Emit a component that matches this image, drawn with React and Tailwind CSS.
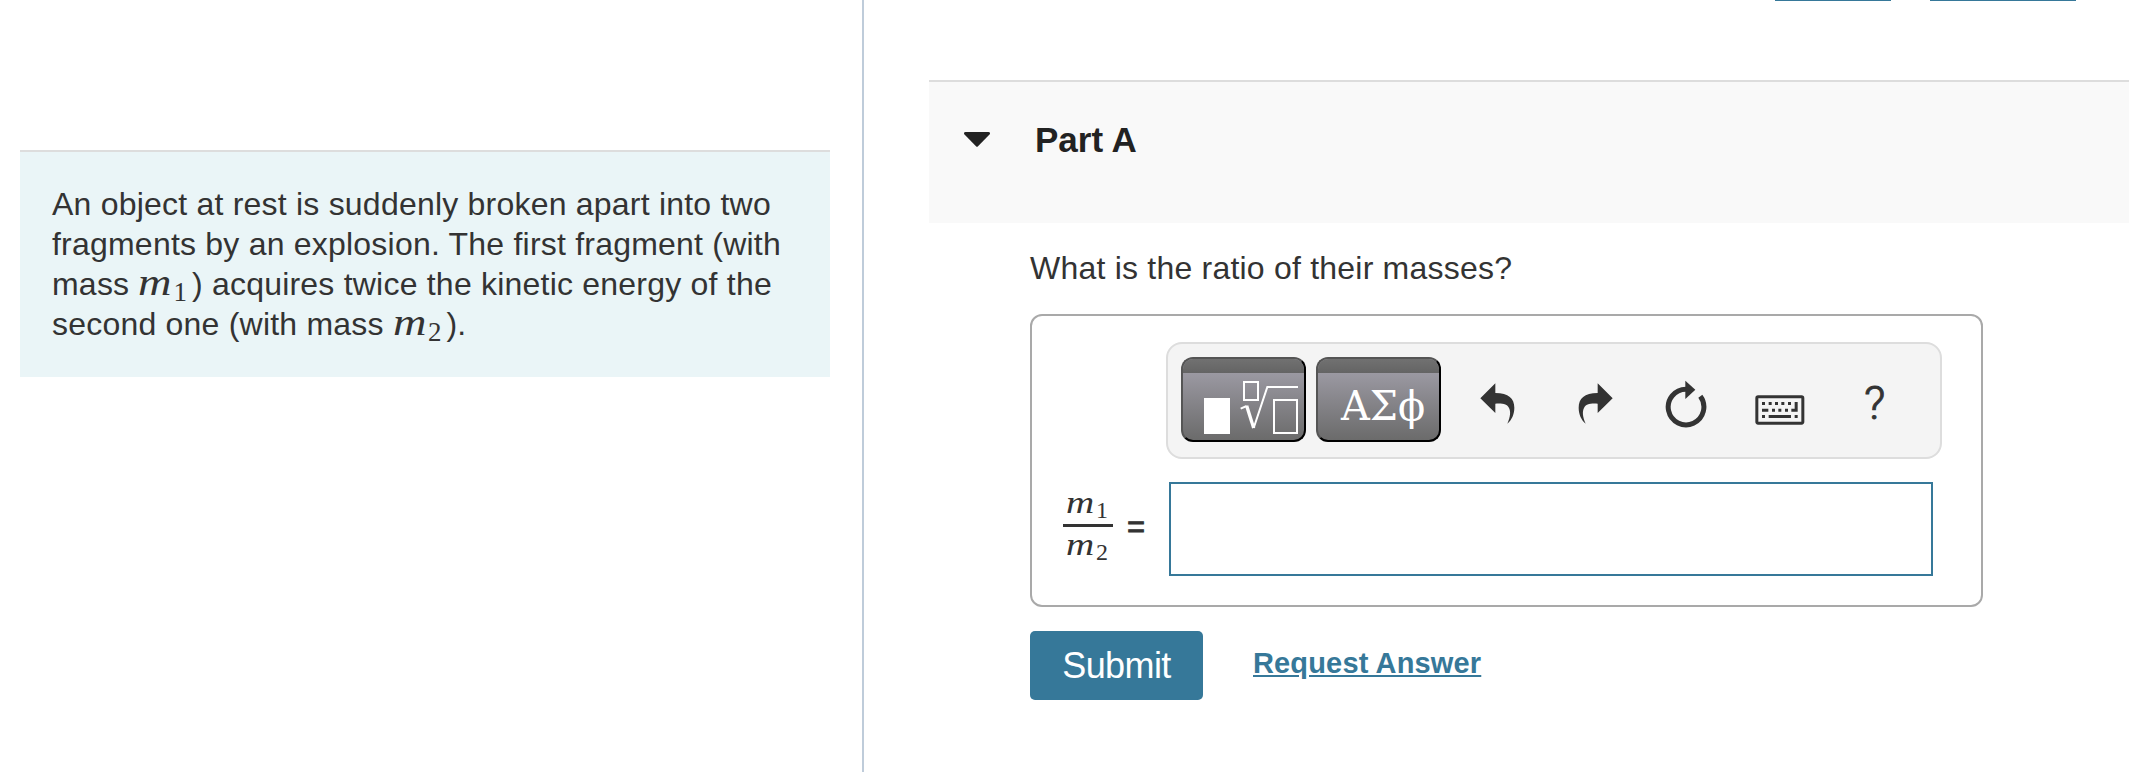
import { useState } from "react";

// Variable with a numeric subscript, e.g. m1
function Variable({ name, sub, small }) {
  if (small) {
    return (
      <span className="flex items-baseline font-['Liberation_Serif',serif] leading-none">
        <span className="w-[29px] origin-left scale-x-[1.22] text-[32px] italic">{name}</span>
        <span className="relative top-[5px] ml-px text-[24px]">{sub}</span>
      </span>
    );
  }

  return (
    <span className="mr-[5px] inline-flex items-baseline font-['Liberation_Serif',serif] leading-[34px] tracking-normal">
      <span className="inline-block w-[35px] origin-left scale-x-[1.22] text-[38px] italic">{name}</span>
      <span className="relative top-[6px] text-[27px]">{sub}</span>
    </span>
  );
}

function RootIcon() {
  return (
    <svg className="ml-[21px] mt-[8px] h-[54px] w-[95px]" viewBox="132 138 285 162" fill="none" stroke="#fff" strokeWidth="6">
      <rect x="132" y="189" width="78" height="108" fill="#fff" stroke="none" />
      <rect x="252" y="141" width="42" height="54" />
      <path d="M242 221l18-8" />
      <path d="M260 212l21 67" strokeWidth="10" />
      <path d="M281 279l41-123h92" />
      <rect x="342" y="195" width="69" height="99" />
    </svg>
  );
}

function UndoIcon() {
  return (
    <svg className="h-[41px] w-[35px]" viewBox="90 144 105 123" fill="#333">
      <path d="M91 190l45-45v29c40 0 57 17 57 44 0 20-8 37-21 48 10-22 10-38 5-47-6-12-17-14-41-13v28z" />
    </svg>
  );
}

function RefreshIcon() {
  return (
    <svg className="h-[48px] w-[42px]" viewBox="647 134 126 144" fill="#333">
      <path d="M753 183A53.5 53.5 0 1 1 710 161.500" fill="none" stroke="#333" strokeWidth="15" />
      <path d="M708 136l30 27-30 28z" />
    </svg>
  );
}

function KeyboardIcon() {
  return (
    <svg className="h-[30px] w-[50px]" viewBox="75 180 150 90" fill="#333">
      <rect x="80.500" y="185.500" width="138" height="79" rx="4" fill="none" stroke="#333" strokeWidth="9" />
      <path d="M96 201h9v9h-9zM116 201h9v9h-9zM135 201h9v9h-9zM154 201h9v9h-9zM174 201h9v9h-9z" />
      <path d="M96 221h19v9H96zM126 221h9v9h-9zM145 221h9v9h-9zM165 221h9v9h-9zM194 201h9v29h-19v-9h10z" />
      <path d="M96 240h9v9h-9zM116 240h67v9h-67zM194 240h9v9h-9z" />
    </svg>
  );
}

function PaletteButton({ label, children }) {
  return (
    <button
      aria-label={label}
      className="flex h-[85px] w-[125px] flex-col items-start overflow-hidden rounded-[12px] border-2 border-t-[#555] border-r-black border-b-black border-l-[#555] bg-linear-to-b from-[#9b99a2] from-[17%] to-[#6b6b6b] text-white"
    >
      <span className="h-[14px] w-full shrink-0 bg-linear-to-b from-[#717171] to-[#646464]" />
      {children}
    </button>
  );
}

function Toolbar() {
  return (
    <div className="ml-[134px] flex h-[117px] w-[776px] items-start rounded-[16px] border-2 border-[#ddd] bg-[#f4f4f4] pt-[13px] pl-[13px]">
      <div className="flex gap-[10px]">
        <PaletteButton label="Templates">
          <RootIcon />
        </PaletteButton>
        <PaletteButton label="Symbols">
          <span className="mt-[9px] ml-[23px] origin-left scale-x-[1.08] font-['DejaVu_Serif_Condensed','DejaVu_Serif',serif] text-[41px] leading-[48px]">
            ΑΣϕ
          </span>
        </PaletteButton>
      </div>
      <button aria-label="undo" className="mt-[26px] ml-[39px]">
        <UndoIcon />
      </button>
      <button aria-label="redo" className="mt-[26px] ml-[63px] -scale-x-100">
        <UndoIcon />
      </button>
      <button aria-label="reset" className="mt-[23px] ml-[52px]">
        <RefreshIcon />
      </button>
      <button aria-label="keyboard shortcuts" className="mt-[38px] ml-[48px]">
        <KeyboardIcon />
      </button>
      <button
        aria-label="help"
        className="mt-[19px] ml-[59px] font-['Roboto',sans-serif] text-[47px] leading-[54px] font-light text-[#333] [-webkit-text-stroke:0.9px_#333]"
      >
        ?
      </button>
    </div>
  );
}

export default function App() {
  const [answer, setAnswer] = useState("");

  return (
    <div className="flex h-[772px] w-[2156px] overflow-hidden bg-white font-['Liberation_Sans',Arial,sans-serif] text-[#333]">
      {/* Problem statement */}
      <aside className="w-[864px] shrink-0 border-r-2 border-[#bfccda] pt-[150px] pl-[20px]">
        <div className="h-[227px] w-[810px] border-t-2 border-[#ddd] bg-[#eaf5f7] pt-[32px] pl-[32px] text-[32px] leading-[40px] tracking-[0.215px] whitespace-nowrap">
          <p className="h-[40px]">An object at rest is suddenly broken apart into two</p>
          <p className="h-[40px]">fragments by an explosion. The first fragment (with</p>
          <p className="h-[40px]">
            mass <Variable name="m" sub="1" />) acquires twice the kinetic energy of the
          </p>
          <p className="h-[40px]">
            second one (with mass <Variable name="m" sub="2" />).
          </p>
        </div>
      </aside>

      {/* Question part */}
      <main className="flex-1 pl-[65px]">
        <div className="flex h-[80px] gap-[39px] pl-[846px]">
          <span className="h-px w-[116px] bg-[#367899]" />
          <span className="h-px w-[146px] bg-[#367899]" />
        </div>
        <header className="flex h-[143px] w-[1200px] items-start border-t-2 border-[#ddd] bg-[#f9f9f9]">
          <svg className="mt-[50px] ml-[35px] h-[15px] w-[26px]" viewBox="0 0 26 15" fill="#222">
            <path d="M1.500 0h23q2.500.5 1 2.500L14 14.200q-1 1-2 0L.5 2.500Q-1 .5 1.500 0z" />
          </svg>
          <h2 className="mt-[37px] ml-[45px] text-[35px] leading-[42px] font-bold text-[#222]">Part A</h2>
        </header>

        <section className="pl-[101px]">
          <p className="pt-[25px] text-[32px] leading-[40px] tracking-[0.215px]">What is the ratio of their masses?</p>
          <div className="mt-[26px] h-[293px] w-[953px] rounded-[12px] border-2 border-[#a9a9a9] pt-[26px]">
            <Toolbar />
            <div className="mt-[23px] flex h-[94px] items-start pl-[31px]">
              <div className="mt-[4px] w-[50px]">
                <div className="h-[38px] pl-[3px]">
                  <Variable name="m" sub="1" small />
                </div>
                <div className="h-[3px] bg-[#333]" />
                <div className="pt-px pl-[3px]">
                  <Variable name="m" sub="2" small />
                </div>
              </div>
              <span className="mt-[25px] ml-[14px] w-[42px] text-[31px] leading-[40px] [-webkit-text-stroke:0.8px_#333]">=</span>
              <input
                value={answer}
                onChange={(e) => setAnswer(e.target.value)}
                className="h-[94px] w-[764px] border-2 border-[#367899] bg-white px-3 outline-none"
              />
            </div>
          </div>
          <div className="mt-[24px] flex items-start">
            <button className="h-[69px] w-[173px] rounded-[5px] bg-[#367899] text-[36px] tracking-[-0.6px] text-white">
              Submit
            </button>
            <a href="#" className="mt-[14px] ml-[50px] text-[29px] leading-[36px] font-bold tracking-[0.15px] text-[#367899] underline">
              Request Answer
            </a>
          </div>
        </section>
      </main>
    </div>
  );
}
